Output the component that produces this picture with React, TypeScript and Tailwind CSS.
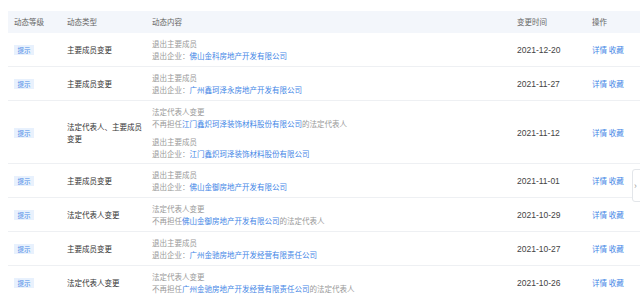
import React from "react";

type Row = {
  type: React.ReactNode;
  content: React.ReactNode;
  date: string;
  tall?: boolean;
};

const Link = ({ children }: { children: React.ReactNode }) => (
  <span className="text-[#4386e6]">{children}</span>
);

const Exit = ({ company }: { company: string }) => (
  <div>
    <div>退出主要成员</div>
    <div>
      退出企业：<Link>{company}</Link>
    </div>
  </div>
);

const Legal = ({ company }: { company: string }) => (
  <div>
    <div>法定代表人变更</div>
    <div>
      不再担任<Link>{company}</Link>的法定代表人
    </div>
  </div>
);

const rows: Row[] = [
  { type: "主要成员变更", content: <Exit company="佛山金科房地产开发有限公司" />, date: "2021-12-20" },
  { type: "主要成员变更", content: <Exit company="广州鑫珂泽永房地产开发有限公司" />, date: "2021-11-27" },
  {
    type: (
      <>
        法定代表人、主要成员
        <br />
        变更
      </>
    ),
    content: (
      <div className="flex flex-col gap-[6px]">
        <Legal company="江门鑫炽珂泽装饰材料股份有限公司" />
        <Exit company="江门鑫炽珂泽装饰材料股份有限公司" />
      </div>
    ),
    date: "2021-11-12",
    tall: true,
  },
  { type: "主要成员变更", content: <Exit company="佛山金御房地产开发有限公司" />, date: "2021-11-01" },
  { type: "法定代表人变更", content: <Legal company="佛山金御房地产开发有限公司" />, date: "2021-10-29" },
  { type: "主要成员变更", content: <Exit company="广州金驰房地产开发经营有限责任公司" />, date: "2021-10-27" },
  { type: "法定代表人变更", content: <Legal company="广州金驰房地产开发经营有限责任公司" />, date: "2021-10-26" },
];

const cols = "grid grid-cols-[53px_85px_365px_75px_50px]";

export default function App() {
  return (
    <div
      className="relative w-[640px] h-[299px] bg-white overflow-hidden text-[7.5px] leading-[12px]"
      style={{ fontFamily: '"Noto Sans CJK SC", "Noto Sans", sans-serif' }}
    >
      <div className="pt-[11px] pl-[8px]">
        <div className={`${cols} h-[22px] items-center bg-[#f3f6fb] text-[#666]`}>
          <div className="pl-[6px]">动态等级</div>
          <div className="pl-[6px]">动态类型</div>
          <div className="pl-[6px]">动态内容</div>
          <div className="pl-[6px]">变更时间</div>
          <div className="pl-[6px]">操作</div>
        </div>
        {rows.map((r, i) => (
          <div
            key={i}
            className={`${cols} items-center border-b border-[#eef0f3] ${r.tall ? "pt-[5px] pb-[3px]" : "pt-[5px] pb-[4px]"}`}
          >
            <div className="pl-[6px]">
              <span className="inline-flex items-center justify-center w-[20px] h-[10px] bg-[#e8f1fd] text-[#4a8ae6] text-[6.5px] leading-none">
                提示
              </span>
            </div>
            <div className="pl-[6px] text-[#333]">{r.type}</div>
            <div className="pl-[6px] text-[#999]">{r.content}</div>
            <div
              className="pl-[6px] text-[#444] text-[8.5px]"
              style={{ fontFamily: '"Liberation Sans", Arial, sans-serif' }}
            >
              {r.date}
            </div>
            <div className="pl-[6px] text-[#4386e6]">详情 收藏</div>
          </div>
        ))}
      </div>
      <div className="absolute left-[632px] top-[169px] w-[14px] h-[33px] bg-white border border-[#e3e6ea] rounded-l-[3px] flex items-center pl-[1px] text-[#999] text-[9px]">
        ›
      </div>
    </div>
  );
}
